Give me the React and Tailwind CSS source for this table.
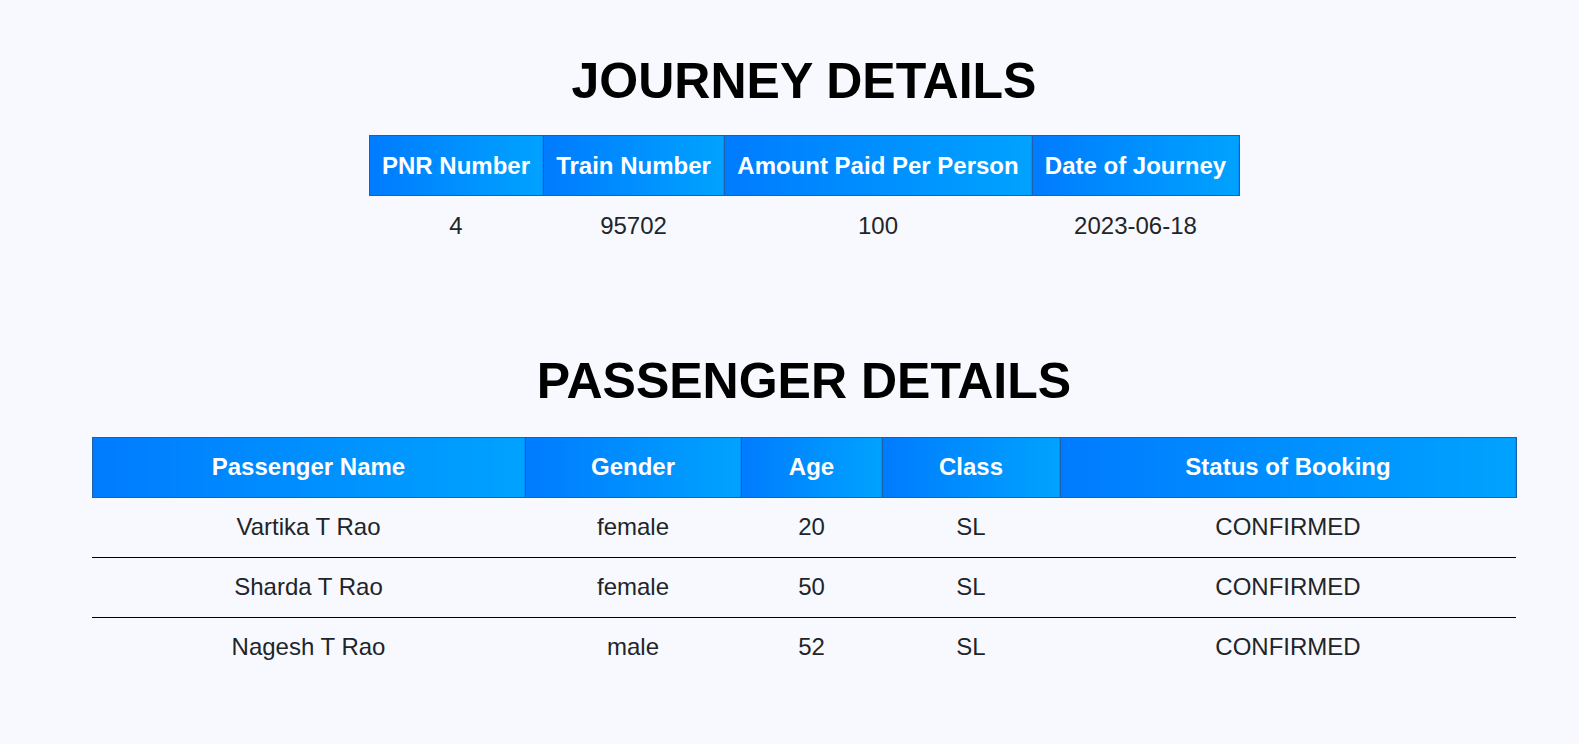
const journeyCols = [
  { title: "PNR Number", w: "w-[174px]" },
  { title: "Train Number", w: "w-[181px]" },
  { title: "Amount Paid Per Person", w: "w-[308px]" },
  { title: "Date of Journey", w: "w-[207px]" },
];
const journeyRow = ["4", "95702", "100", "2023-06-18"];

const passengers = [
  ["Vartika T Rao", "female", "20", "SL", "CONFIRMED"],
  ["Sharda T Rao", "female", "50", "SL", "CONFIRMED"],
  ["Nagesh T Rao", "male", "52", "SL", "CONFIRMED"],
];

const passengerCols = [
  { title: "Passenger Name", w: "w-[433px]" },
  { title: "Gender", w: "w-[216px]" },
  { title: "Age", w: "w-[141px]" },
  { title: "Class", w: "w-[178px]" },
  { title: "Status of Booking", w: "w-[456px]" },
];

const th =
  "h-[60px] border border-[#1f5fae] bg-gradient-to-r from-[#007bff] to-[#00a2ff] px-2 text-center text-[24px] font-bold text-white whitespace-nowrap";

export default function App() {
  return (
    <div
      className="min-h-screen bg-[#f8f9fe] pl-[29px] text-[#212529]"
      style={{ fontFamily: '"Liberation Sans", Arial, sans-serif' }}
    >
      <div className="flex flex-col items-center pt-[54px]">
        <h1 className="text-[50px] font-bold leading-[54px] text-black">JOURNEY DETAILS</h1>
        <table className="mt-[27px] w-[870px] table-fixed border-collapse">
          <thead>
            <tr>
              {journeyCols.map((c) => (
                <th key={c.title} className={`${th} ${c.w}`}>
                  {c.title}
                </th>
              ))}
            </tr>
          </thead>
          <tbody>
            <tr>
              {journeyRow.map((v, i) => (
                <td key={i} className="h-[60px] text-center text-[24px]">
                  {v}
                </td>
              ))}
            </tr>
          </tbody>
        </table>

        <h1 className="mt-[98px] text-[50px] font-bold leading-[54px] text-black">PASSENGER DETAILS</h1>
        <table className="mt-[29px] w-[1424px] table-fixed border-collapse">
          <thead>
            <tr>
              {passengerCols.map((c) => (
                <th key={c.title} className={`${th} ${c.w}`}>
                  {c.title}
                </th>
              ))}
            </tr>
          </thead>
          <tbody>
            {passengers.map((p, ri) => (
              <tr
                key={p[0]}
                className={ri < passengers.length - 1 ? "border-b border-black" : ""}
              >
                {p.map((v, i) => (
                  <td key={i} className="h-[60px] text-center text-[24px]">
                    {v}
                  </td>
                ))}
              </tr>
            ))}
          </tbody>
        </table>
      </div>
    </div>
  );
}
